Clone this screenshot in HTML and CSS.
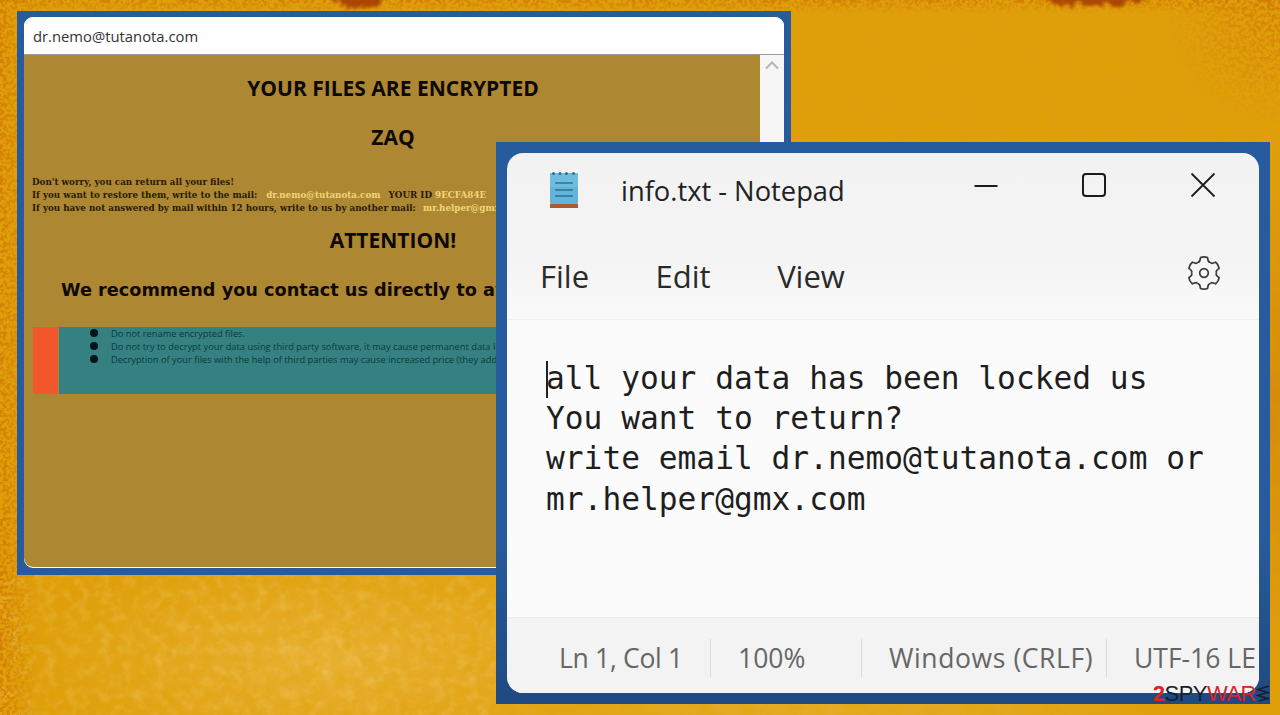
FILE: index.html
```html
<!DOCTYPE html>
<html lang="en">
<head>
<meta charset="utf-8">
<title>info.txt - Notepad</title>
<link rel="stylesheet" href="styles.css">
</head>
<body>
<div class="desktop">
  <svg class="texture" width="1280" height="715" aria-hidden="true">
    <defs>
      <linearGradient id="fade-left"><stop offset="0" stop-color="#fff"/><stop offset="1" stop-color="#000"/></linearGradient>
      <linearGradient id="fade-top" x2="0" y2="1"><stop offset="0" stop-color="#fff"/><stop offset="1" stop-color="#000"/></linearGradient>
      <radialGradient id="fade-corner" cx="1" cy="0" r="1"><stop offset="0" stop-color="#fff"/><stop offset="1" stop-color="#000"/></radialGradient>
      <mask id="m-left" maskUnits="userSpaceOnUse" x="0" y="0" width="1280" height="715"><rect width="40" height="715" fill="url(#fade-left)"/></mask>
      <mask id="m-top" maskUnits="userSpaceOnUse" x="0" y="0" width="1280" height="715"><rect width="1280" height="14" fill="url(#fade-top)"/></mask>
      <mask id="m-corner" maskUnits="userSpaceOnUse" x="0" y="0" width="1280" height="715"><rect x="1160" width="120" height="130" fill="url(#fade-corner)"/></mask>
    </defs>
    <filter id="grain" x="0" y="0" width="100%" height="100%">
      <feTurbulence type="fractalNoise" baseFrequency="0.05 0.07" numOctaves="5" seed="7"/>
      <feColorMatrix values="0 0 0 0 0.72  0 0 0 0 0.36  0 0 0 0 0  1.400 0 0 0 -0.520"/>
    </filter>
    <filter id="light" x="0" y="0" width="100%" height="100%">
      <feTurbulence type="fractalNoise" baseFrequency="0.09" numOctaves="4" seed="23"/>
      <feColorMatrix values="0 0 0 0 1  0 0 0 0 0.85  0 0 0 0 0.5  0 1.400 0 0 -0.620"/>
    </filter>
    <filter id="specks" x="0" y="0" width="100%" height="100%">
      <feTurbulence type="fractalNoise" baseFrequency="0.28" numOctaves="3" seed="11"/>
      <feColorMatrix values="0 0 0 0 0.62  0 0 0 0 0.14  0 0 0 0 0  0 5 0 0 -2.100"/>
    </filter>
    <filter id="rough" x="-30%" y="-60%" width="160%" height="220%">
      <feTurbulence type="fractalNoise" baseFrequency="0.12" numOctaves="4" seed="5" result="n"/>
      <feDisplacementMap in="SourceGraphic" in2="n" scale="18" xChannelSelector="R" yChannelSelector="G"/>
      <feGaussianBlur stdDeviation="1.600"/>
    </filter>
    <rect width="1280" height="715" filter="url(#grain)"/>
    <rect y="575" width="500" height="140" filter="url(#light)" opacity=".5"/>
    <g mask="url(#m-left)"><rect width="40" height="715" filter="url(#specks)"/></g>
    <g mask="url(#m-top)"><rect width="1280" height="14" filter="url(#specks)"/></g>
    <g mask="url(#m-corner)"><rect x="1160" width="120" height="130" filter="url(#specks)"/></g>
    <g filter="url(#rough)">
      <ellipse class="stain" cx="355" cy="0" rx="26" ry="8"/>
      <ellipse class="stain" cx="1095" cy="-3" rx="55" ry="8"/>
    </g>
  </svg>

  <section class="window back">
    <div class="back-inner">
      <header class="back-title">dr.nemo@tutanota.com</header>
      <div class="back-body">
        <main class="note">
          <h1 class="head first">YOUR FILES ARE ENCRYPTED</h1>
          <h1 class="head zaq">ZAQ</h1>
          <div class="clip mail-lines">
            <p>Don't worry, you can return all your files!</p>
            <p>If you want to restore them, write to the mail: <span class="hl gap-l">dr.nemo@tutanota.com</span> <span class="gap-m">YOUR ID</span> <span class="hl">9ECFA84E</span></p>
            <p>If you have not answered by mail within 12 hours, write to us by another mail: <span class="hl gap-s">mr.helper@gmx.com</span></p>
          </div>
          <h1 class="head attention">ATTENTION!</h1>
          <div class="clip recommend"><h2 class="recommend-text">We recommend you contact us directly to avoid</h2></div>
          <div class="warn">
            <div class="warn-mark"></div>
            <ul class="warn-list">
              <li>Do not rename encrypted files.</li>
              <li>Do not try to decrypt your data using third party software, it may cause permanent data loss.</li>
              <li>Decryption of your files with the help of third parties may cause increased price (they add their fee to our).</li>
            </ul>
          </div>
        </main>
        <aside class="scroll">
          <svg width="16" height="10" viewBox="0 0 16 10"><path d="M2 8.500 8 2.500l6 6" fill="none" stroke="#b4b4b4" stroke-width="2"/></svg>
        </aside>
      </div>
    </div>
  </section>

  <section class="window front">
    <div class="front-inner">
      <header class="titlebar">
        <svg class="app-icon" width="32" height="40" viewBox="0 0 32 40">
          <rect x="2" y="3" width="28" height="31" rx="1.500" fill="#63b4da"/>
          <rect x="2" y="3" width="28" height="14" fill="#7cc4e2" opacity=".5"/>
          <g fill="#2f6f94"><circle cx="5.500" cy="3.500" r="1.500"/><circle cx="12" cy="3.500" r="1.500"/><circle cx="18.500" cy="3.500" r="1.500"/><circle cx="25.500" cy="3.500" r="1.500"/></g>
          <path d="M7 13h18M7 20h18M7 26h18" stroke="#2f7199" stroke-width="1.600"/>
          <rect x="2" y="34" width="28" height="4" fill="#a85a35"/>
        </svg>
        <span class="doc-name">info.txt - Notepad</span>
        <div class="controls">
          <svg width="26" height="26" viewBox="0 0 26 26"><path d="M2.500 14H25.500" stroke="#1c1c1c" stroke-width="2"/></svg>
          <svg width="26" height="26" viewBox="0 0 26 26"><rect x="2" y="2" width="22" height="22" rx="3" fill="none" stroke="#1c1c1c" stroke-width="2"/></svg>
          <svg width="26" height="26" viewBox="0 0 26 26"><path d="M1.500 1.500l23 23M24.500 1.500l-23 23" stroke="#1c1c1c" stroke-width="1.800"/></svg>
        </div>
      </header>
      <nav class="menubar">
        <span class="menu-item">File</span>
        <span class="menu-item">Edit</span>
        <span class="menu-item">View</span>
        <svg class="gear" width="36" height="36" viewBox="-18 -18 36 36">
          <defs><path id="tooth" d="M-6.250-10.830Q-4.400-10.800-4-13L-3.500-15.500Q0-16.900 3.500-15.500L4-13Q4.400-10.800 6.250-10.830"/></defs>
          <g fill="none" stroke="#3a3a3a" stroke-width="1.700">
            <use href="#tooth"/><use href="#tooth" transform="rotate(60)"/><use href="#tooth" transform="rotate(120)"/><use href="#tooth" transform="rotate(180)"/><use href="#tooth" transform="rotate(240)"/><use href="#tooth" transform="rotate(300)"/>
            <circle r="4.300"/>
          </g>
        </svg>
      </nav>
      <div class="editor"><span class="caret"></span><pre class="text">all your data has been locked us
You want to return?
write email dr.nemo@tutanota.com or
mr.helper@gmx.com</pre></div>
      <footer class="status">
        <span class="cell c1">Ln 1, Col 1</span>
        <span class="cell c2">100%</span>
        <span class="cell c3">Windows (CRLF)</span>
        <span class="cell c4">UTF-16 LE</span>
      </footer>
    </div>
    <div class="brand">
      <span class="red b2">2</span><span class="dark">SPY</span><span class="red">WAR</span>
      <svg width="14" height="18" viewBox="0 0 14 18"><path d="M13 1 2 4.500l11 3.500M13 7 2 10.500l11 3.500M13 13 3 16" fill="none" stroke="#15202e" stroke-width="1.800"/></svg>
    </div>
  </section>
</div>
</body>
</html>
```
FILE: styles.css
```css
* { box-sizing: border-box; }
html, body { margin: 0; height: 100%; overflow: hidden; }
.desktop {
  position: relative;
  width: 1280px;
  height: 715px;
  overflow: hidden;
  background:
    radial-gradient(ellipse 420px 200px at 820px 640px, #e8b233 0%, rgba(232,178,51,0) 100%),
    radial-gradient(ellipse 300px 120px at 330px 660px, #e9b135 0%, rgba(233,177,53,0) 100%),
    radial-gradient(ellipse 120px 260px at 1275px 400px, #d58a0e 0%, rgba(213,138,14,0) 100%),
    #df9f0c;
}
.texture { position: absolute; inset: 0; opacity: .6; }
.stain { fill: #8a0d06; }

.window { position: absolute; background: #265b9d; }
.back { left: 17px; top: 11px; width: 774px; height: 564px; padding: 6px 7px 7px; background: #265b9d; }
.front { left: 496px; top: 142px; width: 774px; height: 562px; padding: 11px; background: linear-gradient(#265b9d, #265b9d 70%, #1e4a80); }

.back-inner { height: 100%; display: flex; flex-direction: column; border-radius: 9px; overflow: hidden; background: #fff; }
.back-title {
  height: 38px;
  flex: none;
  padding: 9px 0 0 9px;
  font: 14.800px/20px "Open Sans", sans-serif;
  color: #333;
  background: #fff;
  border-bottom: 1px solid #9a9a9a;
}
.back-body { flex: 1; min-height: 0; display: flex; padding-bottom: 1px; }
.note { flex: 1; min-width: 0; background: #ae8733; color: #0c0904; overflow: hidden; border-radius: 0 0 0 9px; }
.scroll { width: 24px; flex: none; background: #f6f6f6; padding: 5px 0 0 4px; }
.scroll svg { display: block; }

.head { margin: 0; text-align: center; font: 700 21px/26px "Open Sans", sans-serif; }
.first { padding-top: 20px; padding-left: 2px; }
.zaq { margin-top: 23px; padding-left: 2px; }
.attention { margin-top: 11px; padding-left: 2px; }
.clip { width: 472px; overflow: hidden; }
.mail-lines { margin: 26px 0 0; padding-left: 8px; font: 700 8.750px/13.200px "DejaVu Serif", serif; color: #281b08; white-space: nowrap; }
.mail-lines p { margin: 0; }
.hl { color: #f1d679; font-weight: 700; }
.gap-l { margin-left: 6px; }
.gap-m { margin-left: 5px; }
.gap-s { margin-left: 4px; }
.recommend { margin-top: 24px; padding-left: 37px; }
.recommend-text { margin: 0; white-space: nowrap; font: 700 17.700px/26px "DejaVu Sans", sans-serif; color: #0f0a04; }
.warn { display: flex; gap: 1px; height: 67px; margin: 24px 0 0 9px; }
.warn-mark { width: 25px; flex: none; background: #f2572c; }
.warn-list {
  flex: 1;
  margin: 0;
  padding: 0 0 0 31px;
  list-style: none;
  background: #358080;
  color: #0b3a3e;
  font: 9.300px/13px "Open Sans", sans-serif;
  white-space: nowrap;
  overflow: hidden;
}
.warn-list li { display: flex; align-items: center; gap: 13px; width: 406px; overflow: hidden; }
.warn-list li::before { content: ""; width: 8px; height: 8px; flex: none; border-radius: 50%; background: #06141a; }

.front-inner {
  position: relative;
  height: 100%;
  display: flex;
  flex-direction: column;
  border-radius: 16px;
  overflow: hidden;
  background: linear-gradient(#f2f2f2 0, #f4f4f4 110px, #fafafa 166px);
  font-family: "Open Sans", sans-serif;
}
.titlebar { height: 88px; flex: none; display: flex; align-items: center; padding: 0 43px 14px 41px; }
.app-icon { flex: none; }
.doc-name { margin-left: 41px; font-size: 27.300px; color: #222; white-space: nowrap; }
.controls { margin-left: auto; margin-top: -10px; display: flex; gap: 83px; }
.controls svg { display: block; }
.menubar { height: 79px; flex: none; display: flex; align-items: center; padding: 0 37px 8px 33px; gap: 66.500px; border-bottom: 1px solid #f0f0f0; font-size: 31px; color: #2a2a2a; }
.gear { margin-left: auto; margin-top: -6px; }
.editor { position: relative; flex: 1; min-height: 0; padding: 38px 0 0 39px; background: #fbfbfb; overflow: hidden; }
.caret { position: absolute; left: 39px; top: 41px; width: 1.500px; height: 37px; background: #222; }
.text { margin: 0; font: 31.220px/40.200px "DejaVu Sans Mono", monospace; color: #1e1e1e; white-space: pre; }
.status { height: 76px; flex: none; display: flex; align-items: center; padding: 5px 0 0; font-size: 26.500px; color: #666; background: #f3f3f3; border-top: 1px solid #ececec; white-space: nowrap; overflow: hidden; }
.cell { display: block; line-height: 38px; }
.c1 { padding-left: 52px; width: 204px; border-right: 1px solid #dcdcdc; letter-spacing: -.3px; }
.c2 { padding-left: 27px; width: 151px; border-right: 1px solid #dcdcdc; }
.c3 { padding-left: 27px; width: 245px; border-right: 1px solid #dcdcdc; letter-spacing: .6px; }
.c4 { padding-left: 27px; }

.brand { position: absolute; right: 0; bottom: 0; display: flex; align-items: center; height: 20px; font: 22px/20px "Liberation Sans", sans-serif; letter-spacing: -.5px; }
.brand svg { flex: none; }
.red { color: #d8232a; }
.b2 { font-weight: 700; }
.dark { color: #15202e; }
```
